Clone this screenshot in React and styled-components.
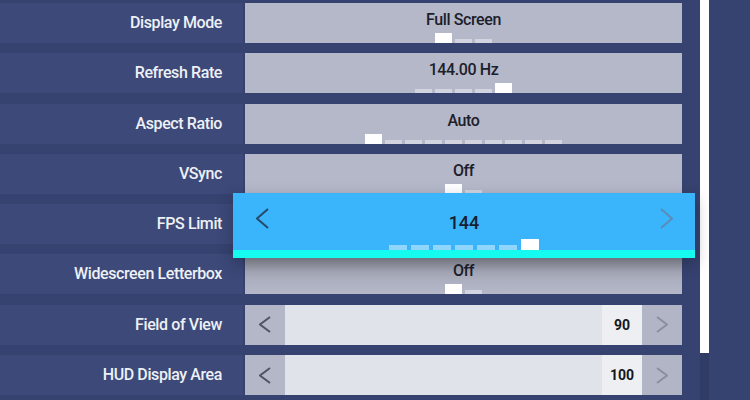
import React from 'react'
import styled, { createGlobalStyle } from 'styled-components'

const GlobalStyle = createGlobalStyle`
    html, body {
        margin: 0;
        padding: 0;
        width: 750px;
        height: 400px;
        overflow: hidden;
        background: #35416d;
        font-family: Roboto, "Noto Sans", "Liberation Sans", sans-serif;
    }
`

const Page = styled.div`
    display: flex;
    width: 750px;
    height: 400px;
    background: #36426f;
`

const List = styled.div`
    width: 700px;
    padding-top: 3px;
    display: flex;
    flex-direction: column;
    gap: 10.3px;
`

const Row = styled.div`
    display: flex;
    height: 40px;
    gap: 2px;
    position: relative;
    z-index: ${props => props.active ? 2 : 1};
`

const Label = styled.div`
    width: 243px;
    box-sizing: border-box;
    padding-right: 21px;
    background: #3c4979;
    color: #eef0f5;
    font-size: 16px;
    font-weight: 500;
    letter-spacing: -0.4px;
    text-align: right;
    line-height: 40px;
    white-space: nowrap;
`

const Control = styled.div`
    position: relative;
    width: 437px;
    height: 40px;
`

const SelectBox = styled.div`
    height: 40px;
    background: ${props => props.shaded
        ? 'linear-gradient(180deg, #909399 0%, #a7aab9 45%, #b4b8c9 100%)'
        : '#b4b8c9'};
    display: flex;
    flex-direction: column;
    align-items: center;
    justify-content: space-between;
`

const Value = styled.div`
    margin-top: 7px;
    color: #1d2029;
    font-size: 16px;
    font-weight: 500;
    letter-spacing: -0.4px;
    line-height: 19px;
`

const Segments = styled.div`
    display: flex;
    align-items: flex-end;
    gap: ${props => props.gap || 3}px;
`

const Segment = styled.div`
    width: ${props => props.w || 17}px;
    height: ${props => props.on ? props.hOn || 10 : props.hOff || 4}px;
    background: ${props => props.on ? '#ffffff' : props.off || '#d2d5e0'};
`

const Highlight = styled.div`
    position: absolute;
    top: -11px;
    left: -12px;
    right: -13px;
    height: 65px;
    background: #3ab4fb;
    border-bottom: 8px solid #16fbf0;
    box-sizing: border-box;
    box-shadow: 0 6px 14px rgba(20, 24, 40, 0.35);
    display: flex;
    align-items: stretch;
`

const HighlightCenter = styled.div`
    flex: 1;
    display: flex;
    flex-direction: column;
    align-items: center;
    justify-content: space-between;
`

const BigValue = styled.div`
    margin-top: 19px;
    color: #172030;
    font-size: 18px;
    font-weight: 500;
    line-height: 21px;
`

const Arrow = styled.div`
    width: ${props => props.w || 40}px;
    display: flex;
    align-items: center;
    justify-content: center;
    background: ${props => props.bg || 'transparent'};
    padding-bottom: ${props => props.pb || 0}px;
`

const Slider = styled.div`
    width: 437px;
    height: 40px;
    display: flex;
`

const Track = styled.div`
    flex: 1;
    background: #e1e3eb;
`

const Number = styled.div`
    width: 40px;
    background: #eeeff3;
    color: #141620;
    font-size: 14px;
    font-weight: 700;
    line-height: 40px;
    text-align: center;
`

const ScrollBar = styled.div`
    width: 9px;
    height: 400px;
    background: #313c66;
    display: flex;
    flex-direction: column;
`

const Thumb = styled.div`
    height: 353px;
    background: #ffffff;
`

const Chevron = ({ dir = 'left', color, w = 12, h = 17, sw = 2 }) => (
    <svg width={w} height={h} viewBox={`0 0 ${w} ${h}`}>
        <polyline
            points={dir === 'left'
                ? `${w - 1},1 1,${h / 2} ${w - 1},${h - 1}`
                : `1,1 ${w - 1},${h / 2} 1,${h - 1}`}
            fill="none"
            stroke={color}
            strokeWidth={sw}
        />
    </svg>
)

const selectors = [
    { label: 'Display Mode', value: 'Full Screen', count: 3, on: 0 },
    { label: 'Refresh Rate', value: '144.00 Hz', count: 5, on: 4 },
    { label: 'Aspect Ratio', value: 'Auto', count: 10, on: 0 },
    { label: 'VSync', value: 'Off', count: 2, on: 0 },
]

const SelectRow = ({ label, value, count, on, shaded }) => (
    <Row>
        <Label>{label}</Label>
        <Control>
            <SelectBox shaded={shaded}>
                <Value>{value}</Value>
                <Segments>
                    {Array.from({ length: count }, (_, i) => (
                        <Segment key={i} on={i === on} />
                    ))}
                </Segments>
            </SelectBox>
        </Control>
    </Row>
)

const SliderRow = ({ label, value }) => (
    <Row>
        <Label>{label}</Label>
        <Slider>
            <Arrow bg="#b3b7c8"><Chevron dir="left" color="#4f5463" /></Arrow>
            <Track />
            <Number>{value}</Number>
            <Arrow bg="#b1b5c6"><Chevron dir="right" color="#8a8fa0" /></Arrow>
        </Slider>
    </Row>
)

const App = () => {
    return (
        <Page>
            <GlobalStyle />
            <List>
                {selectors.map(s => <SelectRow key={s.label} {...s} />)}
                <Row active>
                    <Label>FPS Limit</Label>
                    <Control>
                        <SelectBox />
                        <Highlight>
                            <Arrow w={58} pb={6}><Chevron dir="left" color="#27496c" w={13} h={21} /></Arrow>
                            <HighlightCenter>
                                <BigValue>144</BigValue>
                                <Segments gap={4}>
                                    {Array.from({ length: 7 }, (_, i) => (
                                        <Segment key={i} on={i === 6} w={18} hOn={11} hOff={5} off="#8fd5fc" />
                                    ))}
                                </Segments>
                            </HighlightCenter>
                            <Arrow w={58} pb={6}><Chevron dir="right" color="#5a8cb8" w={13} h={21} /></Arrow>
                        </Highlight>
                    </Control>
                </Row>
                <SelectRow label="Widescreen Letterbox" value="Off" count={2} on={0} shaded />
                <SliderRow label="Field of View" value="90" />
                <SliderRow label="HUD Display Area" value="100" />
            </List>
            <ScrollBar>
                <Thumb />
            </ScrollBar>
        </Page>
    )
}

export default App
